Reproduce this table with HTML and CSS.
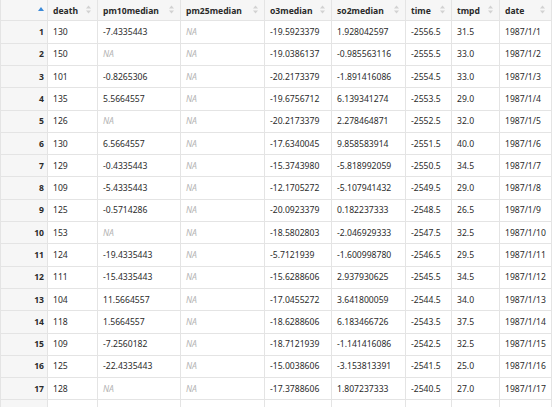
FILE: index.html
```html
<!DOCTYPE html>
<html>
<head>
<meta charset="utf-8">
<link rel="stylesheet" href="styles.css">
</head>
<body>
<table class="grid">
  <colgroup>
    <col class="c-idx"><col class="c-death"><col class="c-pm10"><col class="c-pm25"><col class="c-o3"><col class="c-so2"><col class="c-time"><col class="c-tmpd"><col class="c-date">
  </colgroup>
  <thead>
    <tr class="head">
      <th class="idx-head"><div class="hcell idx-hcell"><svg class="sort-active" width="6" height="4" viewBox="0 0 6 4"><polygon points="0,4 3,0 6,4" fill="#3c8ad8"/></svg></div></th>
      <th><div class="hcell"><span>death</span><svg class="sort" width="5" height="9" viewBox="0 0 5 9"><polygon points="0,3.6 2.5,0.6 5,3.6"/><polygon points="0,5.4 2.5,8.4 5,5.4"/></svg></div></th>
      <th><div class="hcell"><span>pm10median</span><svg class="sort" width="5" height="9" viewBox="0 0 5 9"><polygon points="0,3.6 2.5,0.6 5,3.6"/><polygon points="0,5.4 2.5,8.4 5,5.4"/></svg></div></th>
      <th><div class="hcell"><span>pm25median</span><svg class="sort" width="5" height="9" viewBox="0 0 5 9"><polygon points="0,3.6 2.5,0.6 5,3.6"/><polygon points="0,5.4 2.5,8.4 5,5.4"/></svg></div></th>
      <th><div class="hcell"><span>o3median</span><svg class="sort" width="5" height="9" viewBox="0 0 5 9"><polygon points="0,3.6 2.5,0.6 5,3.6"/><polygon points="0,5.4 2.5,8.4 5,5.4"/></svg></div></th>
      <th><div class="hcell"><span>so2median</span><svg class="sort" width="5" height="9" viewBox="0 0 5 9"><polygon points="0,3.6 2.5,0.6 5,3.6"/><polygon points="0,5.4 2.5,8.4 5,5.4"/></svg></div></th>
      <th><div class="hcell"><span>time</span><svg class="sort" width="5" height="9" viewBox="0 0 5 9"><polygon points="0,3.6 2.5,0.6 5,3.6"/><polygon points="0,5.4 2.5,8.4 5,5.4"/></svg></div></th>
      <th><div class="hcell"><span>tmpd</span><svg class="sort" width="5" height="9" viewBox="0 0 5 9"><polygon points="0,3.6 2.5,0.6 5,3.6"/><polygon points="0,5.4 2.5,8.4 5,5.4"/></svg></div></th>
      <th><div class="hcell"><span>date</span><svg class="sort" width="5" height="9" viewBox="0 0 5 9"><polygon points="0,3.6 2.5,0.6 5,3.6"/><polygon points="0,5.4 2.5,8.4 5,5.4"/></svg></div></th>
    </tr>
  </thead>
  <tbody>
    <tr><td class="idx">1</td><td>130</td><td>-7.4335443</td><td class="na">NA</td><td>-19.5923379</td><td>1.928042597</td><td>-2556.5</td><td>31.5</td><td>1987/1/1</td></tr>
    <tr><td class="idx">2</td><td>150</td><td class="na">NA</td><td class="na">NA</td><td>-19.0386137</td><td>-0.985563116</td><td>-2555.5</td><td>33.0</td><td>1987/1/2</td></tr>
    <tr><td class="idx">3</td><td>101</td><td>-0.8265306</td><td class="na">NA</td><td>-20.2173379</td><td>-1.891416086</td><td>-2554.5</td><td>33.0</td><td>1987/1/3</td></tr>
    <tr><td class="idx">4</td><td>135</td><td>5.5664557</td><td class="na">NA</td><td>-19.6756712</td><td>6.139341274</td><td>-2553.5</td><td>29.0</td><td>1987/1/4</td></tr>
    <tr><td class="idx">5</td><td>126</td><td class="na">NA</td><td class="na">NA</td><td>-20.2173379</td><td>2.278464871</td><td>-2552.5</td><td>32.0</td><td>1987/1/5</td></tr>
    <tr><td class="idx">6</td><td>130</td><td>6.5664557</td><td class="na">NA</td><td>-17.6340045</td><td>9.858583914</td><td>-2551.5</td><td>40.0</td><td>1987/1/6</td></tr>
    <tr><td class="idx">7</td><td>129</td><td>-0.4335443</td><td class="na">NA</td><td>-15.3743980</td><td>-5.818992059</td><td>-2550.5</td><td>34.5</td><td>1987/1/7</td></tr>
    <tr><td class="idx">8</td><td>109</td><td>-5.4335443</td><td class="na">NA</td><td>-12.1705272</td><td>-5.107941432</td><td>-2549.5</td><td>29.0</td><td>1987/1/8</td></tr>
    <tr><td class="idx">9</td><td>125</td><td>-0.5714286</td><td class="na">NA</td><td>-20.0923379</td><td>0.182237333</td><td>-2548.5</td><td>26.5</td><td>1987/1/9</td></tr>
    <tr><td class="idx">10</td><td>153</td><td class="na">NA</td><td class="na">NA</td><td>-18.5802803</td><td>-2.046929333</td><td>-2547.5</td><td>32.5</td><td>1987/1/10</td></tr>
    <tr><td class="idx">11</td><td>124</td><td>-19.4335443</td><td class="na">NA</td><td>-5.7121939</td><td>-1.600998780</td><td>-2546.5</td><td>29.5</td><td>1987/1/11</td></tr>
    <tr><td class="idx">12</td><td>111</td><td>-15.4335443</td><td class="na">NA</td><td>-15.6288606</td><td>2.937930625</td><td>-2545.5</td><td>34.5</td><td>1987/1/12</td></tr>
    <tr><td class="idx">13</td><td>104</td><td>11.5664557</td><td class="na">NA</td><td>-17.0455272</td><td>3.641800059</td><td>-2544.5</td><td>34.0</td><td>1987/1/13</td></tr>
    <tr><td class="idx">14</td><td>118</td><td>1.5664557</td><td class="na">NA</td><td>-18.6288606</td><td>6.183466726</td><td>-2543.5</td><td>37.5</td><td>1987/1/14</td></tr>
    <tr><td class="idx">15</td><td>109</td><td>-7.2560182</td><td class="na">NA</td><td>-18.7121939</td><td>-1.141416086</td><td>-2542.5</td><td>32.5</td><td>1987/1/15</td></tr>
    <tr><td class="idx">16</td><td>125</td><td>-22.4335443</td><td class="na">NA</td><td>-15.0038606</td><td>-3.153813391</td><td>-2541.5</td><td>25.0</td><td>1987/1/16</td></tr>
    <tr><td class="idx">17</td><td>128</td><td class="na">NA</td><td class="na">NA</td><td>-17.3788606</td><td>1.807237333</td><td>-2540.5</td><td>27.0</td><td>1987/1/17</td></tr>
    <tr><td class="idx"></td><td></td><td></td><td></td><td></td><td></td><td></td><td></td><td></td></tr>
  </tbody>
</table>
</body>
</html>
```

FILE: styles.css
```css
html, body {
  margin: 0;
  padding: 0;
  background: #ffffff;
  overflow: hidden;
}

.grid {
  table-layout: fixed;
  width: 552px;
  border-collapse: separate;
  border-spacing: 0;
  font-family: "Noto Sans", "Open Sans", sans-serif;
  font-size: 8.6px;
  color: #2b2b2b;
}

.c-idx { width: 48px; }
.c-death { width: 50px; }
.c-pm10 { width: 83px; }
.c-pm25 { width: 84px; }
.c-o3 { width: 67px; }
.c-so2 { width: 74px; }
.c-time { width: 46px; }
.c-tmpd { width: 48px; }
.c-date { width: 52px; }

.grid th,
.grid td {
  padding: 0 0 0 5px;
  border-right: 1px solid #e4e4e4;
  border-bottom: 1px solid #e4e4e4;
  white-space: nowrap;
  overflow: hidden;
  text-align: left;
  vertical-align: middle;
  box-sizing: border-box;
}

.grid th:first-child,
.grid td:first-child {
  border-left: 1px solid #e4e4e4;
}

.head {
  height: 21.4px;
}

.grid th {
  background: #f6f6f6;
  font-weight: 700;
  color: #2a2a2a;
  padding-right: 6px;
}

.hcell {
  display: flex;
  align-items: center;
  justify-content: space-between;
  padding-top: 1px;
}

.idx-hcell {
  justify-content: flex-end;
  padding-top: 0;
}

.sort {
  fill: #d2d2d2;
  flex: none;
  margin-top: -3px;
}

.sort-active {
  flex: none;
  margin-top: -3px;
  margin-right: -3px;
}

.grid tbody tr {
  height: 22.3px;
}

.grid td.idx {
  background: #f6f6f6;
  font-weight: 700;
  text-align: right;
  padding: 0 3px 0 0;
  color: #2a2a2a;
}

.grid td.na {
  color: #b4b4b4;
  font-style: italic;
}
```
